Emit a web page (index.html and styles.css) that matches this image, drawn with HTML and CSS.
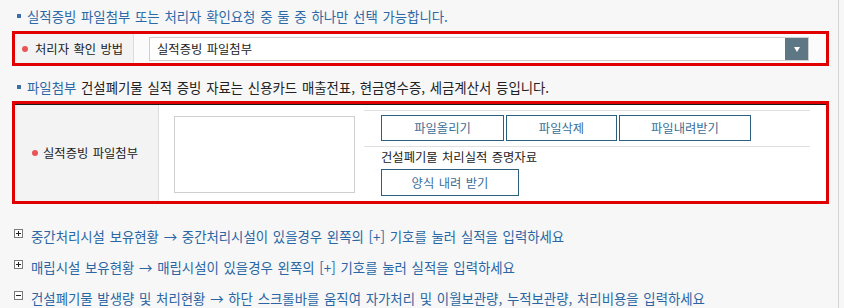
FILE: index.html
```html
<!DOCTYPE html>
<html lang="ko">
  <head>
    <meta charset="UTF-8" />
    <title>실적증빙</title>
    <link rel="stylesheet" href="styles.css">
  </head>
  <body>
    <div class="page">
      <p class="note first"><span class="sq"></span>실적증빙 파일첨부 또는 처리자 확인요청 중 둘 중 하나만 선택 가능합니다.</p>

      <div class="frame">
        <div class="method">
          <div class="label"><i class="dot"></i>처리자 확인 방법</div>
          <div class="field">
            <div class="select">
              <span>실적증빙 파일첨부</span>
              <span class="arrow"></span>
            </div>
          </div>
        </div>
      </div>

      <p class="note second"><span class="sq"></span><em>파일첨부</em>&nbsp;건설폐기물 실적 증빙 자료는 신용카드 매출전표, 현금영수증, 세금계산서 등입니다.</p>

      <div class="frame">
        <div class="attach">
          <div class="label wide"><i class="dot"></i>실적증빙 파일첨부</div>
          <div class="field files">
            <div class="file-list"></div>
            <div class="actions">
              <div class="btn-row">
                <button class="btn up">파일올리기</button>
                <button class="btn del">파일삭제</button>
                <button class="btn down">파일내려받기</button>
              </div>
              <div class="form-row">
                <p>건설폐기물 처리실적 증명자료</p>
                <button class="btn form">양식 내려 받기</button>
              </div>
            </div>
          </div>
        </div>
      </div>

      <ul class="toggles">
        <li>
          <svg width="9" height="9" viewBox="0 0 9 9"><rect x="0.5" y="0.5" width="8" height="8" fill="#fff" stroke="#7a7a7a"/><path d="M2 4.5h5M4.5 2v5" stroke="#222"/></svg>
          중간처리시설 보유현황 → 중간처리시설이 있을경우 왼쪽의 [+] 기호를 눌러 실적을 입력하세요
        </li>
        <li>
          <svg width="9" height="9" viewBox="0 0 9 9"><rect x="0.5" y="0.5" width="8" height="8" fill="#fff" stroke="#7a7a7a"/><path d="M2 4.5h5M4.5 2v5" stroke="#222"/></svg>
          매립시설 보유현황 → 매립시설이 있을경우 왼쪽의 [+] 기호를 눌러 실적을 입력하세요
        </li>
        <li>
          <svg width="9" height="9" viewBox="0 0 9 9"><rect x="0.5" y="0.5" width="8" height="8" fill="#fff" stroke="#7a7a7a"/><path d="M2 4.5h5" stroke="#222"/></svg>
          건설폐기물 발생량 및 처리현황 → 하단 스크롤바를 움직여 자가처리 및 이월보관량, 누적보관량, 처리비용을 입력하세요
        </li>
      </ul>
    </div>
  </body>
</html>
```

FILE: styles.css
```css
body {
  margin: 0;
  background-color: #f7f7f7;
  font-family: "Noto Sans CJK KR", "Noto Sans", sans-serif;
  font-size: 13.4px;
  word-spacing: 1px;
  color: #222;
}

.page {
  box-sizing: border-box;
  width: 839px;
  min-height: 308px;
  padding: 0 9px 0 12px;
  border-right: 1px solid #d4d4d4;
}

.note {
  display: flex;
  align-items: flex-end;
  box-sizing: border-box;
  margin: 0;
  padding-left: 5px;
  line-height: 20px;
  white-space: nowrap;
}

.note.first {
  height: 31px;
  padding-bottom: 5px;
  color: #2d69a6;
}

.note.second {
  height: 35px;
  padding-bottom: 4px;
}

.note em {
  font-style: normal;
  color: #2d69a6;
}

.sq {
  width: 4px;
  height: 4px;
  margin: 0 6px 8px 0;
  background-color: #3a6fa8;
}

.frame {
  border: 3px solid #e00000;
  font-size: 12.3px;
}

.label {
  display: flex;
  align-items: center;
  box-sizing: border-box;
  width: 119px;
  padding-left: 7px;
  background-color: #f3f3f3;
  border-right: 1px solid #dcdcdc;
}

.label.wide {
  width: 144px;
  padding-left: 17px;
}

.dot {
  width: 6px;
  height: 6px;
  margin-right: 7px;
  border-radius: 50%;
  background-color: #e8545a;
}

.label.wide .dot {
  margin-right: 5px;
}

/* 처리자 확인 방법 */
.method {
  display: flex;
  height: 29px;
}

.field {
  flex: 1;
  padding: 3px 17px 2px 15px;
  background-color: #fbfbfb;
}

.select {
  display: flex;
  justify-content: space-between;
  align-items: center;
  box-sizing: border-box;
  height: 24px;
  padding-left: 7px;
  background-color: #fff;
  border: 1px solid #cfcfcf;
}

.arrow {
  display: flex;
  justify-content: center;
  align-items: center;
  width: 23px;
  height: 22px;
  background-color: #5e7785;
}

.arrow::after {
  content: "";
  border-left: 3px solid transparent;
  border-right: 3px solid transparent;
  border-top: 5px solid #fff;
}

/* 파일첨부 */
.attach {
  display: flex;
  height: 96px;
  border-top: 1px solid #1a1a1a;
}

.files {
  display: flex;
  align-items: flex-start;
  padding: 5px 16px 0 15px;
  background-color: #fff;
}

.file-list {
  box-sizing: border-box;
  width: 181px;
  height: 77px;
  margin: 6px 9px 0 0;
  border: 1px solid #cfcfcf;
}

.actions {
  flex: 1;
  border-top: 1px solid #e0e0e0;
}

.btn-row {
  display: flex;
  padding: 4px 0 5px 17px;
  border-bottom: 1px solid #e0e0e0;
}

.btn {
  height: 26px;
  padding: 0;
  background-color: #fff;
  border: 1px solid #2c5e7e;
  color: #3b6d96;
  font-family: inherit;
  font-size: 12.3px;
  word-spacing: 1px;
}

.btn.up {
  width: 123px;
}

.btn.del {
  width: 111px;
  margin-left: 2px;
}

.btn.down {
  width: 132px;
  margin-left: 2px;
}

.form-row {
  padding-left: 17px;
}

.form-row p {
  margin: 0;
  line-height: 20px;
}

.btn.form {
  width: 138px;
  height: 27px;
  margin-top: 2px;
}

/* 하단 안내 */
.toggles {
  margin: 16px 0 0;
  padding: 0 0 0 2px;
  list-style: none;
  color: #2a66a3;
}

.toggles li {
  display: flex;
  align-items: center;
  height: 31px;
  white-space: nowrap;
}

.toggles svg {
  flex: none;
  margin: 0 8px 5px 0;
}
```
